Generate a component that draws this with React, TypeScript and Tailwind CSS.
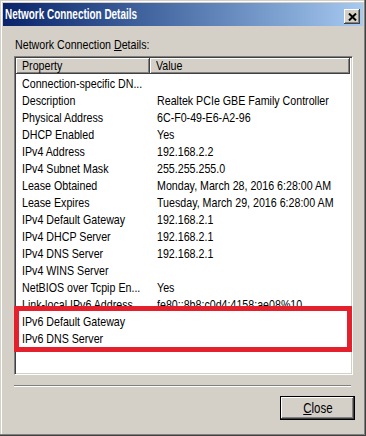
import React from "react";

const rows: [string, string][] = [
  ["Connection-specific DN...", ""],
  ["Description", "Realtek PCIe GBE Family Controller"],
  ["Physical Address", "6C-F0-49-E6-A2-96"],
  ["DHCP Enabled", "Yes"],
  ["IPv4 Address", "192.168.2.2"],
  ["IPv4 Subnet Mask", "255.255.255.0"],
  ["Lease Obtained", "Monday, March 28, 2016 6:28:00 AM"],
  ["Lease Expires", "Tuesday, March 29, 2016 6:28:00 AM"],
  ["IPv4 Default Gateway", "192.168.2.1"],
  ["IPv4 DHCP Server", "192.168.2.1"],
  ["IPv4 DNS Server", "192.168.2.1"],
  ["IPv4 WINS Server", ""],
  ["NetBIOS over Tcpip En...", "Yes"],
  ["Link-local IPv6 Address", "fe80::8b8:c0d4:4158:ae08%10"],
  ["IPv6 Default Gateway", ""],
  ["IPv6 DNS Server", ""],
];

// the screenshot's text is narrower than Arial, squeeze it a bit
const narrow = "inline-block origin-left scale-x-[0.82] whitespace-nowrap";

export default function App() {
  return (
    <div
      className="w-[366px] h-[436px] bg-[#d4d0c8] flex flex-col overflow-hidden text-black shadow-[inset_-1px_-1px_0_#404040,inset_-2px_-2px_0_#808080,inset_1px_1px_0_#d4d0c8,inset_2px_2px_0_#ffffff]"
      style={{ fontFamily: '"Liberation Sans", Arial, sans-serif' }}
    >
      {/* Title bar */}
      <div className="mx-[3px] mt-[3px] h-[23px] flex items-center justify-between pl-[2px] pr-[3px] bg-gradient-to-r from-[#0a246a] to-[#a6caf0]">
        <span className="inline-block origin-left scale-x-[0.71] whitespace-nowrap text-white font-bold text-[14px]">
          Network Connection Details
        </span>
        <div className="w-[16px] h-[15px] mt-[4px] bg-[#d4d0c8] flex items-center justify-center shadow-[inset_-1px_-1px_0_#404040,inset_1px_1px_0_#ffffff,inset_-2px_-2px_0_#808080]">
          <svg width="9" height="8" viewBox="0 0 9 8">
            <path d="M1 0.5 L8 7.5 M8 0.5 L1 7.5" stroke="#000" strokeWidth="2" />
          </svg>
        </div>
      </div>

      <div className="flex flex-col pl-[14px] pr-[13px] pt-[11px]">
        <div className="text-[13px] leading-[16px] pl-[1px]">
          <span className={narrow}>
            Network Connection <span className="underline">D</span>etails:
          </span>
        </div>

        {/* List box */}
        <div className="relative mt-[3px] h-[319px] bg-white border-t border-l border-[#808080] border-b border-r border-b-white border-r-white shadow-[inset_1px_1px_0_#404040,inset_-1px_-1px_0_#d4d0c8]">
          <div className="flex h-[16px] ml-[1px] mt-[1px] mr-[2px] text-[13px] leading-[15px]">
            <div className="w-[134px] shrink-0 bg-[#d4d0c8] pl-[6px] shadow-[inset_-1px_-1px_0_#404040,inset_1px_1px_0_#ffffff,inset_-2px_-2px_0_#808080]">
              <span className={narrow}>Property</span>
            </div>
            <div className="flex-1 bg-[#d4d0c8] pl-[6px] shadow-[inset_-1px_-1px_0_#404040,inset_1px_1px_0_#ffffff,inset_-2px_-2px_0_#808080]">
              <span className={narrow}>Value</span>
            </div>
          </div>
          <div className="pt-[1px]">
            {rows.map(([k, v]) => (
              <div key={k} className="flex h-[17px] items-center text-[13px]">
                <div className="w-[135px] shrink-0 pl-[7px]">
                  <span className={narrow}>{k}</span>
                </div>
                <div className="pl-[7px] min-w-0">
                  <span className={narrow}>{v}</span>
                </div>
              </div>
            ))}
          </div>
          <div className="absolute left-[-1px] top-[249px] w-[338px] h-[46px] border-[5px] border-[#e4202c]" />
        </div>

        {/* Separator */}
        <div className="mt-[10px] mr-[2px] h-[2px] border-t border-[#808080] border-b border-b-white" />

        <div className="flex justify-end mt-[9px] mr-[-2px]">
          <div className="w-[75px] h-[24px] border border-black bg-[#d4d0c8] flex items-center justify-center text-[14px] shadow-[inset_-1px_-1px_0_#404040,inset_1px_1px_0_#ffffff,inset_-2px_-2px_0_#808080]">
            <span className="inline-block scale-x-[0.82]">
              <span className="underline">C</span>lose
            </span>
          </div>
        </div>
      </div>
    </div>
  );
}
